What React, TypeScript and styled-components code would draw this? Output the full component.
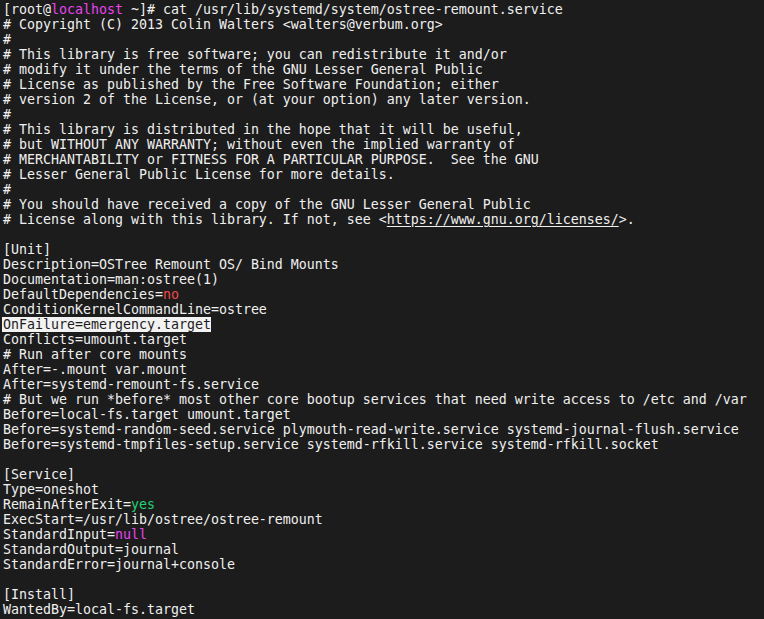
import React from "react";
import styled, { createGlobalStyle } from "styled-components";

const Global = createGlobalStyle`
  html, body { margin: 0; padding: 0; background: #1c1c1c; }
  #root { min-height: 619px; background: #1c1c1c; }
`;

const Terminal = styled.div`
  box-sizing: border-box;
  width: 764px;
  height: 619px;
  overflow: hidden;
  background: #1c1c1c;
  color: #f0f0f0;
  padding: 2px 0 0 3px;
  font-family: "DejaVu Sans Mono", "Liberation Mono", monospace;
  font-size: 13.29px;
  display: flex;
  flex-direction: column;
`;

const Line = styled.div`
  height: 15px;
  line-height: 15px;
  white-space: pre;
`;

const Tone = styled.span<{ $c: "magenta" | "red" | "green" }>`
  color: ${(p) =>
    p.$c === "magenta" ? "#e844f0" : p.$c === "red" ? "#f04a4a" : "#22d272"};
`;

const Selected = styled.span`
  background: #f2f2f2;
  color: #1c1c1c;
  display: inline-block;
  height: 15px;
  margin-left: -1px;
  padding-left: 1px;
`;

const Link = styled.span`
  text-decoration: underline;
  text-underline-offset: 2px;
`;

const lines: React.ReactNode[] = [
  <>[root@<Tone $c="magenta">localhost</Tone> ~]# cat /usr/lib/systemd/system/ostree-remount.service</>,
  "# Copyright (C) 2013 Colin Walters <walters@verbum.org>",
  "#",
  "# This library is free software; you can redistribute it and/or",
  "# modify it under the terms of the GNU Lesser General Public",
  "# License as published by the Free Software Foundation; either",
  "# version 2 of the License, or (at your option) any later version.",
  "#",
  "# This library is distributed in the hope that it will be useful,",
  "# but WITHOUT ANY WARRANTY; without even the implied warranty of",
  "# MERCHANTABILITY or FITNESS FOR A PARTICULAR PURPOSE.  See the GNU",
  "# Lesser General Public License for more details.",
  "#",
  "# You should have received a copy of the GNU Lesser General Public",
  <># License along with this library. If not, see &lt;<Link>https://www.gnu.org/licenses/</Link>&gt;.</>,
  "",
  "[Unit]",
  "Description=OSTree Remount OS/ Bind Mounts",
  "Documentation=man:ostree(1)",
  <>DefaultDependencies=<Tone $c="red">no</Tone></>,
  "ConditionKernelCommandLine=ostree",
  <Selected>OnFailure=emergency.target</Selected>,
  "Conflicts=umount.target",
  "# Run after core mounts",
  "After=-.mount var.mount",
  "After=systemd-remount-fs.service",
  "# But we run *before* most other core bootup services that need write access to /etc and /var",
  "Before=local-fs.target umount.target",
  "Before=systemd-random-seed.service plymouth-read-write.service systemd-journal-flush.service",
  "Before=systemd-tmpfiles-setup.service systemd-rfkill.service systemd-rfkill.socket",
  "",
  "[Service]",
  "Type=oneshot",
  <>RemainAfterExit=<Tone $c="green">yes</Tone></>,
  "ExecStart=/usr/lib/ostree/ostree-remount",
  <>StandardInput=<Tone $c="magenta">null</Tone></>,
  "StandardOutput=journal",
  "StandardError=journal+console",
  "",
  "[Install]",
  "WantedBy=local-fs.target",
];

export default function App() {
  return (
    <>
      <Global />
      <Terminal>
        {lines.map((l, i) => (
          <Line key={i}>{l === "" ? " " : l}</Line>
        ))}
      </Terminal>
    </>
  );
}
